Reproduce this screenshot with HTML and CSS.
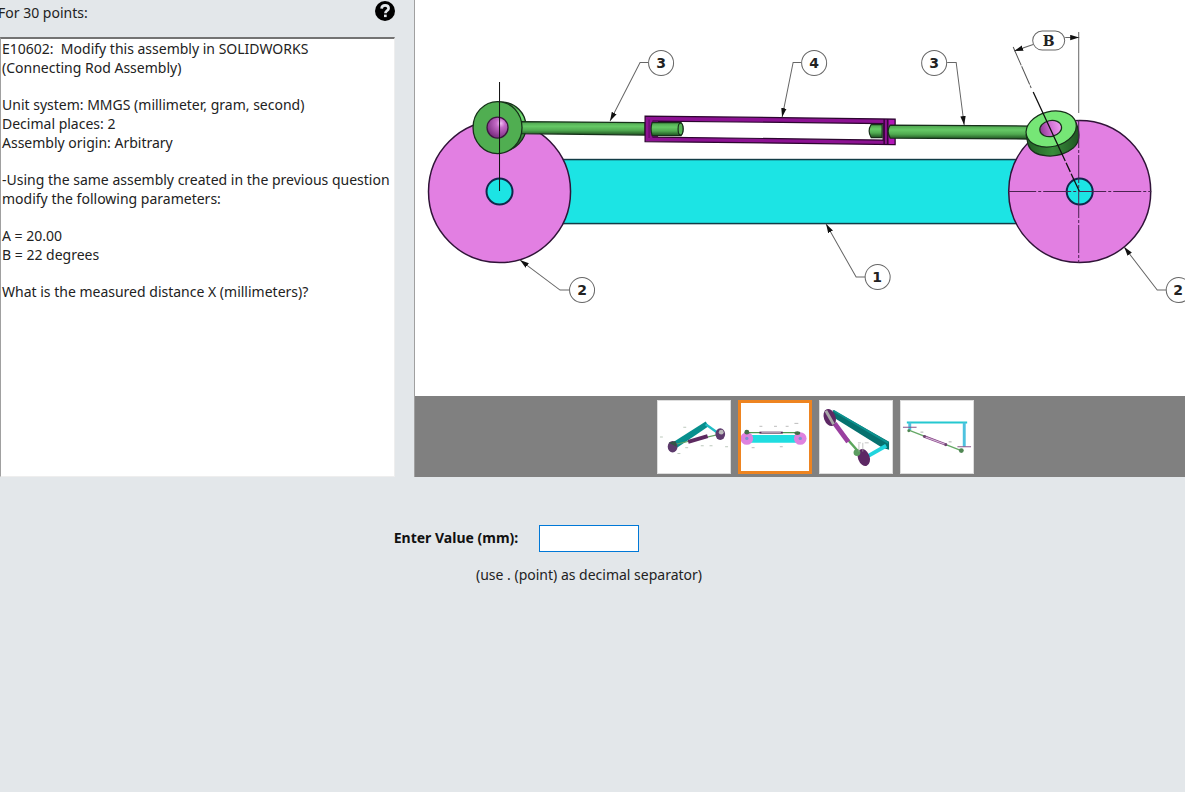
FILE: index.html
```html
<!DOCTYPE html>
<html lang="en">
<head>
<meta charset="utf-8">
<meta name="viewport" content="width=device-width, initial-scale=1">
<title>Connecting Rod Assembly</title>
<link rel="stylesheet" href="styles.css">
</head>
<body>
<main class="exam">
  <div class="top">
    <section class="question">
      <header class="question-head">
        <span class="points">For 30 points:</span>
        <button class="help" type="button" aria-label="Help">
          <svg viewBox="0 0 20 20" aria-hidden="true"><circle cx="10" cy="10" r="10" fill="#000"/><path d="M6.6 7.6C6.7 5.4 8 4.3 10.100 4.300c2.100 0 3.500 1.100 3.500 2.900 0 2.500-3.200 2.700-3.200 5" fill="none" stroke="#e3e7ea" stroke-width="2.700"/><rect x="9" y="13.600" width="2.700" height="2.500" fill="#e3e7ea"/></svg>
        </button>
      </header>
      <div class="question-body">
        <p>E10602:&nbsp; Modify this assembly in SOLIDWORKS<br>(Connecting Rod Assembly)</p>
        <p>Unit system: MMGS (millimeter, gram, second)<br>Decimal places: 2<br>Assembly origin: Arbitrary</p>
        <p>-Using the same assembly created in the previous question<br>modify the following parameters:</p>
        <p>A = 20.00<br>B = 22 degrees</p>
        <p>What is the measured distance X (millimeters)?</p>
      </div>
    </section>
    <section class="viewer">
      <svg class="drawing" viewBox="415 0 770 396" role="img" aria-label="Connecting rod assembly, front view">
        <defs>
          <linearGradient id="rod" x1="0" y1="0" x2="0" y2="1"><stop offset="0" stop-color="#4a9f4b"/><stop offset=".35" stop-color="#66c966"/><stop offset=".65" stop-color="#50aa50"/><stop offset="1" stop-color="#1d5020"/></linearGradient>
          <radialGradient id="pin" cx=".65" cy=".3" r=".7"><stop offset="0" stop-color="#f4c0f6"/><stop offset=".3" stop-color="#c56bc8"/><stop offset="1" stop-color="#7c2f82"/></radialGradient>
          <linearGradient id="pin2"><stop offset="0" stop-color="#8c3892"/><stop offset=".5" stop-color="#cf6fd2"/><stop offset="1" stop-color="#f0a0f2"/></linearGradient>
          <linearGradient id="side"><stop offset="0" stop-color="#225c25"/><stop offset=".5" stop-color="#388c3a"/><stop offset="1" stop-color="#205523"/></linearGradient>
          <linearGradient id="rim" x1="0" y1="0" x2="0" y2="1"><stop offset="0" stop-color="#3f953f"/><stop offset=".3" stop-color="#77e277"/><stop offset=".6" stop-color="#4aa34b"/><stop offset="1" stop-color="#153c18"/></linearGradient>
          <marker id="arrow" viewBox="0 0 10 6" refX="10" refY="3" markerWidth="9" markerHeight="6" markerUnits="userSpaceOnUse" orient="auto-start-reverse"><path d="M0 0L10 3L0 6z" fill="#111"/></marker>
        </defs>
        <rect x="540" y="159.500" width="500" height="64" fill="#1ce4e4" stroke="#123c46" stroke-width="1.500"/>
        <g stroke="#301338" stroke-width="1.500">
          <circle cx="499.500" cy="191.500" r="71" fill="#e27fe2"/>
          <circle cx="1079.500" cy="191.500" r="71" fill="#e27fe2"/>
        </g>
        <g fill="#1ce4e4" stroke="#10284a" stroke-width="2">
          <circle cx="499.500" cy="191.500" r="13"/>
          <circle cx="1079.500" cy="191.500" r="13"/>
        </g>
        <g stroke="#17301a" stroke-width="1.300">
          <circle cx="501.500" cy="126.500" r="24.500" fill="url(#rim)"/>
          <path d="M518 121.500L645 122.500V135L518 133.500z" fill="url(#rod)"/>
          <ellipse cx="497.500" cy="127.500" rx="24.500" ry="26" fill="#50ae51"/>
          <circle cx="497.500" cy="127.500" r="10.500" fill="url(#pin)" stroke="#3c1740"/>
        </g>
        <path fill-rule="evenodd" d="M645 116L895 119V144.500L645 141.500zM653 121V137L883 140V123.500z" fill="#8d1293" stroke="#2c062f" stroke-width="1.200"/>
        <path d="M649 138V119.500" fill="none" stroke="#5c0a61"/>
        <path d="M653 120.500H658V123H653zM653 135H658V137.500H653z" fill="#5c0a61"/>
        <path d="M889 120H894V144H889z" fill="#b316b8"/>
        <path d="M884 119V144M887.500 119V144" stroke="#37053b" stroke-width="1.500"/>
        <g stroke="#17301a" stroke-width="1.200">
          <path d="M652 122.500H681Q685 129 681 135.500H652Q650 129 652 122.500z" fill="url(#rod)"/>
          <ellipse cx="680.500" cy="129" rx="2.500" ry="6" fill="#55b456"/>
          <path d="M882 124.500H871Q867 131 871 137.500H882z" fill="url(#rod)"/>
          <path d="M890 125L1030 126V139L890 138Q886 131 890 125z" fill="url(#rod)"/>
          <path d="M1026 135L1028 145C1033 158 1058 160 1073 148C1079 143 1081 136 1076 123z" fill="url(#side)"/>
          <ellipse cx="1051" cy="129" rx="25.500" ry="17.500" transform="rotate(-14 1051 129)" fill="#76e676"/>
          <ellipse cx="1050.500" cy="128.500" rx="11" ry="8" transform="rotate(-12 1050.500 128.500)" fill="url(#pin2)"/>
        </g>
        <g fill="none" stroke="#222" stroke-width="1">
          <path d="M499.500 82V191" stroke="#111"/>
          <path d="M1078.500 32V113" stroke="#666"/>
          <path d="M1078.500 120V263M1008 191.500H1151" stroke="#4a2350" stroke-dasharray="28 2 3 2"/>
          <path d="M1013 47L1031 88" stroke="#555" stroke-dasharray="20 1"/>
          <path d="M1033 92L1079 191" stroke="#111" stroke-width="1.300" stroke-dasharray="76 2 10 2"/>
        </g>
        <g fill="none" stroke="#666" stroke-width="1">
          <path d="M648 62.500H640L610 121" marker-end="url(#arrow)"/>
          <path d="M801 62.500H793L782 117" marker-end="url(#arrow)"/>
          <path d="M947 62.500H956L964 125" marker-end="url(#arrow)"/>
          <path d="M569 290H560L520 260" marker-end="url(#arrow)"/>
          <path d="M865 277H856L826 224" marker-end="url(#arrow)"/>
          <path d="M1166 290H1157L1124 247" marker-end="url(#arrow)"/>
          <path d="M1033 44.500L1014 51" marker-end="url(#arrow)"/>
          <path d="M1065 37.500H1079" marker-end="url(#arrow)"/>
        </g>
        <g fill="#fff" stroke="#666" stroke-width="1">
          <circle cx="661" cy="63" r="12.500"/>
          <circle cx="814" cy="63" r="12.500"/>
          <circle cx="934" cy="63" r="12.500"/>
          <circle cx="582" cy="290" r="12.500"/>
          <circle cx="877.500" cy="277" r="12.500"/>
          <circle cx="1178.500" cy="290" r="12.500"/>
          <rect x="1032.500" y="31" width="32" height="19" rx="9.500"/>
        </g>
        <g class="callout">
          <text x="661" y="68">3</text>
          <text x="814" y="68">4</text>
          <text x="934" y="68">3</text>
          <text x="582" y="295">2</text>
          <text x="877" y="282">1</text>
          <text x="1178" y="295">2</text>
          <text class="dim" x="1048.500" y="46">B</text>
        </g>
      </svg>
      <div class="thumbs">
        <button class="thumb" type="button" aria-label="View 1">
          <svg viewBox="0 0 74 74" aria-hidden="true"><path d="M13 44L49 21L52 26L18 49z" fill="#078f8d"/><path d="M49 24L63 34" stroke="#21bcc5" stroke-width="2.500"/><path d="M16 45L64 34" stroke="#64a064" stroke-width="1.200"/><path d="M31 42L51 36" stroke="#5d2a60" stroke-width="4"/><ellipse cx="15" cy="47" rx="5" ry="6" fill="#5d3a6c"/><path d="M11 43L18 41L19 47z" fill="#335446"/><ellipse cx="64" cy="34" rx="5" ry="6" fill="#5d3a6c"/><circle cx="65" cy="32" r="2.500" fill="#b9b9b9"/><path d="M26 27h3M2 37h3M28 48h3M44 46h3M53 46h3M20 54h3M69 47h3" stroke="#bbc7bb"/></svg>
        </button>
        <button class="thumb selected" type="button" aria-label="View 2" aria-pressed="true">
          <svg viewBox="2 2 70 70" aria-hidden="true"><path d="M10 35H64V43H10z" fill="#1fdde0"/><circle cx="8" cy="38.500" r="6.500" fill="#de82df"/><circle cx="63" cy="38.500" r="6.500" fill="#de82df"/><circle cx="8" cy="38.500" r="1.700" fill="#7794cf"/><circle cx="63" cy="38.500" r="1.700" fill="#7794cf"/><path d="M8 32.500H62" stroke="#4a984e" stroke-width="1.300"/><path d="M21 32.500H45" stroke="#572658" stroke-width="2"/><path d="M23 32.500H43" stroke="#eee" stroke-width=".7"/><circle cx="8" cy="32" r="2.500" fill="#427047"/><ellipse cx="60" cy="33" rx="3" ry="2" fill="#427047"/><path d="M21 26h3M36 26h3M48 26h3M13 48h3M42 47h3M57 23h4" stroke="#bbb"/></svg>
        </button>
        <button class="thumb" type="button" aria-label="View 3">
          <svg viewBox="0 0 74 74" aria-hidden="true"><path d="M13 9L71 42V50L64 48L14 17z" fill="#06716f"/><path d="M14 10L70 43" stroke="#0d918f" stroke-width="2"/><path d="M47 58L68 46" stroke="#20d5de" stroke-width="4"/><path d="M13 22L42 55" stroke="#5ba65c" stroke-width="2.500"/><path d="M15 23L29 42" stroke="#9a40a0" stroke-width="5"/><ellipse cx="10" cy="17" rx="6" ry="9" transform="rotate(-20 10 17)" fill="#5d2864"/><path d="M6 10L14 24" stroke="#a9a9a9" stroke-width="3"/><ellipse cx="45" cy="58" rx="6" ry="9" transform="rotate(-20 45 58)" fill="#5d2864"/><circle cx="38" cy="53" r="3.500" fill="#5c9d61"/><path d="M40 44v8M44 43v9M39 43h3M46 43h4" stroke="#aaa" stroke-width=".7"/></svg>
        </button>
        <button class="thumb" type="button" aria-label="View 4">
          <svg viewBox="0 0 74 74" aria-hidden="true"><path d="M6 22H68" stroke="#25c8d0" stroke-width="2"/><path d="M9 22V30M65 22V47" stroke="#4ec2df" stroke-width="3"/><path d="M2 27H16M58 47H72" stroke="#8a568c" stroke-width="1.200"/><path d="M8 30L62 51" stroke="#65a866" stroke-width="1.500"/><path d="M24 36.500L47 45" stroke="#8f4a91" stroke-width="2.500"/><path d="M25 37L46 44.700" stroke="#dcc7dc" stroke-width="1"/><circle cx="62" cy="51" r="2.500" fill="#4f8753"/><circle cx="8" cy="30.500" r="1.500" fill="#4f8753"/><circle cx="24" cy="36.500" r="1.500" fill="#6d4770"/><circle cx="46" cy="45" r="1.500" fill="#6d4770"/><path d="M20 32h3M49 42h3" stroke="#aaa"/></svg>
        </button>
      </div>
    </section>
  </div>
  <form class="answer">
    <div class="answer-row">
      <label for="value">Enter Value (mm):</label>
      <input id="value" type="text" inputmode="decimal" aria-describedby="hint">
    </div>
    <p class="hint" id="hint">(use . (point) as decimal separator)</p>
  </form>
</main>
</body>
</html>
```
FILE: styles.css
```css
* { box-sizing: border-box; }
body {
  margin: 0;
  background: #e3e7ea;
  color: #222;
  font: 14px/19px "Noto Sans", "Open Sans", sans-serif;
  overflow-x: hidden;
}
p { margin: 0; }
.top {
  display: grid;
  grid-template-columns: calc(35% - 1px) 1fr;
}
.question {
  display: flex;
  flex-direction: column;
  padding-right: 19px;
}
.question-head {
  display: flex;
  align-items: flex-start;
  justify-content: space-between;
  height: 37px;
  padding-top: 1px;
}
.points { padding-top: 2px; margin-left: -2px; }
.help {
  width: 20px;
  height: 20px;
  padding: 0;
  border: 0;
  background: none;
}
.help svg { display: block; width: 100%; }
.question-body {
  flex: 1;
  display: flex;
  flex-direction: column;
  gap: 18px;
  padding: 0 1px;
  background: #fff;
  border: 1px solid #eee;
  border-top: 2px solid #737373;
  border-left-color: #a0a0a0;
  white-space: nowrap;
}
.viewer {
  display: flex;
  flex-direction: column;
  min-width: 0;
  background: #fff;
  border-left: 1px solid #a0a0a0;
}
.drawing { display: block; width: 100%; }
.callout {
  font: bold 14px "DejaVu Sans", sans-serif;
  fill: #222;
  text-anchor: middle;
}
.dim { font-family: "DejaVu Serif", serif; }
.thumbs {
  display: flex;
  justify-content: center;
  gap: 7px;
  padding: 4px 0 3px 32px;
  background: #808080;
}
.thumb {
  width: 74px;
  height: 74px;
  padding: 0;
  border: 1px solid #ddd;
  background: #fff;
}
.thumb.selected { border: 3px solid #ee8420; }
.thumb svg { display: block; width: 100%; height: 100%; }
.answer {
  display: flex;
  flex-direction: column;
  align-items: center;
  gap: 13px;
  padding-top: 48px;
}
.answer-row {
  display: flex;
  align-items: center;
  gap: 21px;
  margin-right: 152px;
}
.answer label { padding-bottom: 3px; font-weight: bold; color: #111; }
.answer input {
  width: 100px;
  height: 27px;
  padding: 2px 6px;
  border: 1px solid #0078d7;
  background: #fff;
  font: inherit;
}
.hint { margin-right: 7px; }
```
